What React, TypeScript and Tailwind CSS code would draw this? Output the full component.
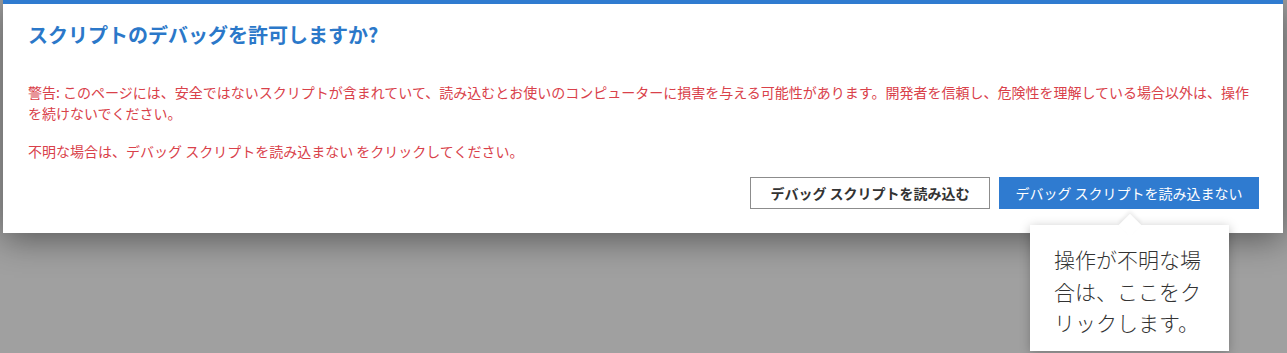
export default function App() {
  return (
    <div className="relative h-[353px] w-[1287px] overflow-hidden bg-[#a0a0a0] font-['Noto_Sans_CJK_JP','Noto_Sans',sans-serif]">
      <div className="ml-[3px] w-[1280px] border-t-4 border-[#2f7bd0] bg-white pl-[25px] pr-[24px] pt-[16px] pb-[24px] shadow-[0_6px_32px_rgba(0,0,0,0.45)]">
        <h1 className="text-[20px] font-bold leading-[30px] text-[#2b78c9]">スクリプトのデバッグを許可しますか?</h1>
        <div className="mt-[32px] text-[14px] leading-[21px] text-[#d9414a]">
          <p className="whitespace-nowrap">
            警告: このページには、安全ではないスクリプトが含まれていて、読み込むとお使いのコンピューターに損害を与える可能性があります。開発者を信頼し、危険性を理解している場合以外は、操作
            <br />
            を続けないでください。
          </p>
          <p className="mt-[17px]">不明な場合は、デバッグ スクリプトを読み込まない をクリックしてください。</p>
        </div>
        <div className="mt-[15px] flex justify-end gap-[9px]">
          <button className="h-[32px] w-[240px] border border-[#8c8c8c] bg-white text-[14px] font-bold text-[#333]">
            デバッグ スクリプトを読み込む
          </button>
          <div className="relative">
            <button className="h-[32px] w-[260px] bg-[#2f7bd0] text-[14px] text-white">
              デバッグ スクリプトを読み込まない
            </button>
            <div className="absolute left-[31px] top-[48px] w-[199px] bg-white pl-[24px] pr-[24px] pt-[19px] pb-[12px] shadow-[0_2px_10px_rgba(0,0,0,0.25)]">
              <div className="absolute left-1/2 top-[-8px] h-[16px] w-[16px] -translate-x-1/2 rotate-45 bg-white shadow-[-2px_-2px_4px_rgba(0,0,0,0.08)]" />
              <p className="relative text-[21px] font-light leading-[31.5px] text-[#333]">
                操作が不明な場合は、ここをクリックします。
              </p>
            </div>
          </div>
        </div>
      </div>
    </div>
  );
}
